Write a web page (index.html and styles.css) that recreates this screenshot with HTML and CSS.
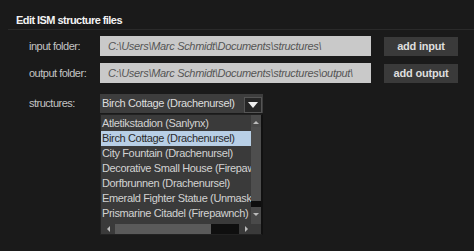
FILE: index.html
```html
<!DOCTYPE html>
<html>
<head>
<meta charset="utf-8">
<link rel="stylesheet" href="styles.css">
</head>
<body>
<div class="panel">
  <div class="header">Edit ISM structure files</div>
  <div class="form">
    <div class="row">
      <div class="label">input folder:</div>
      <div class="field">C:\Users\Marc Schmidt\Documents\structures\</div>
      <div class="btn">add input</div>
    </div>
    <div class="row">
      <div class="label">output folder:</div>
      <div class="field">C:\Users\Marc Schmidt\Documents\structures\output\</div>
      <div class="btn">add output</div>
    </div>
    <div class="row row-select">
      <div class="label">structures:</div>
      <div class="combo">
        <div class="select">
          <div class="select-text">Birch Cottage (Drachenursel)</div>
          <div class="select-arrow"><svg width="10" height="6" viewBox="0 0 10 6"><path d="M0 0H10L5 6Z" fill="#eeeeee"/></svg></div>
        </div>
        <div class="dropdown">
          <div class="list-area">
            <div class="items">
              <div class="item">Atletikstadion (Sanlynx)</div>
              <div class="item selected">Birch Cottage (Drachenursel)</div>
              <div class="item">City Fountain (Drachenursel)</div>
              <div class="item">Decorative Small House (Firepawnch)</div>
              <div class="item">Dorfbrunnen (Drachenursel)</div>
              <div class="item">Emerald Fighter Statue (Unmasked)</div>
              <div class="item">Prismarine Citadel (Firepawnch)</div>
              <div class="item">Simple Watchtower (Drachenursel)</div>
            </div>
            <div class="vscroll">
              <div class="arrow-up"></div>
              <div class="vthumb"></div>
              <div class="vdark"></div>
              <div class="arrow-down"></div>
            </div>
          </div>
          <div class="hscroll">
            <div class="arrow-left"></div>
            <div class="hthumb"></div>
            <div class="hdark"></div>
            <div class="arrow-right"></div>
            <div class="corner"></div>
          </div>
        </div>
      </div>
    </div>
  </div>
</div>
</body>
</html>
```
FILE: styles.css
```css
html, body {
  margin: 0;
  padding: 0;
  background: #1a1a1a;
  width: 474px;
  height: 251px;
  overflow: hidden;
  font-family: "Liberation Sans", Arial, sans-serif;
}
.panel {
  display: flex;
  flex-direction: column;
}
.header {
  margin-left: 8px;
  padding-left: 8px;
  height: 30px;
  box-sizing: border-box;
  padding-top: 14px;
  font-size: 11px;
  font-weight: bold;
  letter-spacing: -0.55px;
  color: #f2f2f2;
  border-bottom: 1px solid #2a2a2a;
  line-height: 12px;
}
.form {
  display: flex;
  flex-direction: column;
  gap: 7px;
  padding-top: 6px;
  padding-left: 29px;
}
.row {
  display: flex;
  align-items: center;
  height: 20px;
}
.row-select {
  margin-top: 4px;
  align-items: flex-start;
  height: 19px;
}
.label {
  width: 71px;
  font-size: 11px;
  letter-spacing: -0.5px;
  color: #c4c4c4;
  line-height: 20px;
}
.row-select .label {
  line-height: 19px;
}
.field {
  width: 271px;
  height: 20px;
  box-sizing: border-box;
  background: #c9c9c9;
  color: #555555;
  font-style: italic;
  font-size: 11px;
  letter-spacing: -0.3px;
  line-height: 20px;
  padding-left: 8px;
  white-space: nowrap;
  overflow: hidden;
}
.btn {
  margin-left: 13px;
  width: 74px;
  height: 19px;
  background: #3a3a3a;
  color: #dedede;
  font-size: 11px;
  font-weight: bold;
  letter-spacing: -0.2px;
  text-align: center;
  line-height: 19px;
}
.combo {
  position: relative;
  width: 163px;
}
.select {
  display: flex;
  height: 19px;
  background: #3d3d3d;
  box-sizing: border-box;
}
.select-text {
  flex: 1;
  color: #dddddd;
  font-size: 11px;
  letter-spacing: -0.35px;
  line-height: 19px;
  padding-left: 2px;
  white-space: nowrap;
  overflow: hidden;
}
.select-arrow {
  width: 18px;
  margin: 3px 1px 0 0;
  height: 16px;
  background: #262626;
  border: 1px solid #555;
  box-sizing: border-box;
  display: flex;
  align-items: center;
  justify-content: center;
}
.dropdown {
  position: absolute;
  top: 20px;
  left: 0;
  width: 163px;
  height: 121px;
  background: #3a3a3a;
  border: 1px solid #222;
  border-right: 2px solid #111;
  box-sizing: border-box;
  display: flex;
  flex-direction: column;
}
.list-area {
  display: flex;
  flex: 1;
  overflow: hidden;
}
.items {
  flex: 1;
  overflow: hidden;
  padding-top: 1px;
}
.item {
  height: 15px;
  line-height: 15px;
  font-size: 11px;
  letter-spacing: -0.35px;
  color: #d2d2d2;
  white-space: nowrap;
  padding-left: 1px;
}
.item.selected {
  background: #b8cfe6;
  color: #2b2b2b;
}
.vscroll {
  width: 10px;
  background: #4a4a4a;
  display: flex;
  flex-direction: column;
  align-items: center;
}
.arrow-up {
  margin-top: 6px;
  width: 0;
  height: 0;
  border-left: 3px solid transparent;
  border-right: 3px solid transparent;
  border-bottom: 3px solid #bbbbbb;
}
.vthumb {
  width: 10px;
  height: 74px;
  margin-top: 3px;
  background: #4e4e4e;
}
.vdark {
  width: 10px;
  height: 6px;
  background: #0e0e0e;
}
.arrow-down {
  margin-top: 6px;
  width: 0;
  height: 0;
  border-left: 3px solid transparent;
  border-right: 3px solid transparent;
  border-top: 3px solid #bbbbbb;
}
.hscroll {
  height: 10px;
  background: #3a3a3a;
  display: flex;
  align-items: center;
}
.arrow-left {
  margin-left: 6px;
  width: 0;
  height: 0;
  border-top: 3px solid transparent;
  border-bottom: 3px solid transparent;
  border-right: 3px solid #bbbbbb;
}
.hthumb {
  margin-left: 5px;
  width: 96px;
  height: 10px;
  background: #5a5a5a;
}
.hdark {
  width: 28px;
  height: 10px;
  background: #0f0f0f;
}
.arrow-right {
  margin-left: 6px;
  width: 0;
  height: 0;
  border-top: 3px solid transparent;
  border-bottom: 3px solid transparent;
  border-left: 3px solid #bbbbbb;
}
.corner {
  margin-left: auto;
  width: 10px;
  height: 10px;
  background: #3a3a3a;
}
```
